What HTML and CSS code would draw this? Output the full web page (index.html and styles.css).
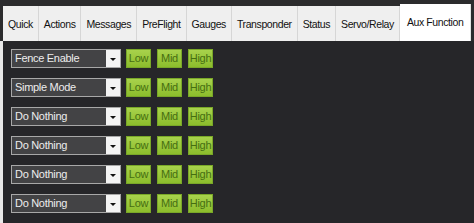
FILE: index.html
```html
<!DOCTYPE html>
<html lang="en">
<head>
<meta charset="UTF-8">
<title>Aux Function</title>
<link rel="stylesheet" href="styles.css">
</head>
<body>
<div class="tabs">
  <div class="tab">Quick</div>
  <div class="tab">Actions</div>
  <div class="tab">Messages</div>
  <div class="tab">PreFlight</div>
  <div class="tab">Gauges</div>
  <div class="tab">Transponder</div>
  <div class="tab">Status</div>
  <div class="tab">Servo/Relay</div>
  <div class="tab active">Aux Function</div>
</div>
<div class="frame">
  <div class="panel">
    <div class="row">
      <div class="combo"><span class="value">Fence Enable</span><span class="arrow"></span></div>
      <div class="btn">Low</div><div class="btn">Mid</div><div class="btn">High</div>
    </div>
    <div class="row">
      <div class="combo"><span class="value">Simple Mode</span><span class="arrow"></span></div>
      <div class="btn">Low</div><div class="btn">Mid</div><div class="btn">High</div>
    </div>
    <div class="row">
      <div class="combo"><span class="value">Do Nothing</span><span class="arrow"></span></div>
      <div class="btn">Low</div><div class="btn">Mid</div><div class="btn">High</div>
    </div>
    <div class="row">
      <div class="combo"><span class="value">Do Nothing</span><span class="arrow"></span></div>
      <div class="btn">Low</div><div class="btn">Mid</div><div class="btn">High</div>
    </div>
    <div class="row">
      <div class="combo"><span class="value">Do Nothing</span><span class="arrow"></span></div>
      <div class="btn">Low</div><div class="btn">Mid</div><div class="btn">High</div>
    </div>
    <div class="row">
      <div class="combo"><span class="value">Do Nothing</span><span class="arrow"></span></div>
      <div class="btn">Low</div><div class="btn">Mid</div><div class="btn">High</div>
    </div>
  </div>
</div>
</body>
</html>
```

FILE: styles.css
```css
html, body {
  margin: 0;
  height: 100%;
  overflow: hidden;
}
body {
  background: #2b2b2d;
  font-family: "Liberation Sans", Arial, sans-serif;
  font-size: 10.5px;
  letter-spacing: -0.3px;
  color: #111;
  padding-top: 4px;
  box-sizing: border-box;
  display: flex;
  flex-direction: column;
}

/* tab strip */
.tabs {
  display: flex;
  align-items: flex-end;
  padding-left: 3px;
  height: 37px;
  flex: none;
}
.tab {
  height: 35px;
  line-height: 37px;
  padding: 0 5px;
  background: #efefef;
  border-right: 1px solid #d6d6d6;
  white-space: nowrap;
  letter-spacing: -0.4px;
}
.tab.active {
  height: 39px;
  line-height: 37px;
  background: #fff;
  padding: 0 7px;
  margin-bottom: -2px;
  border-right: 1px solid #e2e2e2;
}

.frame {
  background: #e8e8e8;
  padding-left: 3px;
  flex: 1;
  display: flex;
}
.panel {
  background: #262629;
  flex: 1;
  padding: 8px 0 0 8px;
  display: flex;
  flex-direction: column;
  gap: 10px;
}

.row {
  display: flex;
  align-items: center;
  gap: 5px;
}
.combo {
  width: 108px;
  height: 17px;
  border: 1px solid #a8a8a8;
  background: #434345;
  display: flex;
}
.combo .value {
  flex: 1;
  color: #ededed;
  line-height: 17px;
  padding-left: 3px;
  font-size: 11px;
}
.combo .arrow {
  width: 14px;
  background: #f4f4f4;
  position: relative;
}
.combo .arrow::after {
  content: "";
  position: absolute;
  left: 4px;
  top: 8px;
  border-left: 3px solid transparent;
  border-right: 3px solid transparent;
  border-top: 3px solid #111;
}

.btn {
  width: 23px;
  height: 17px;
  line-height: 17px;
  text-align: center;
  font-size: 11px;
  color: #466e12;
  background: linear-gradient(#a8d24c, #8cbd2c);
  border: 1px solid #7aa828;
}
.btn + .btn {
  margin-left: 1px;
}
```
